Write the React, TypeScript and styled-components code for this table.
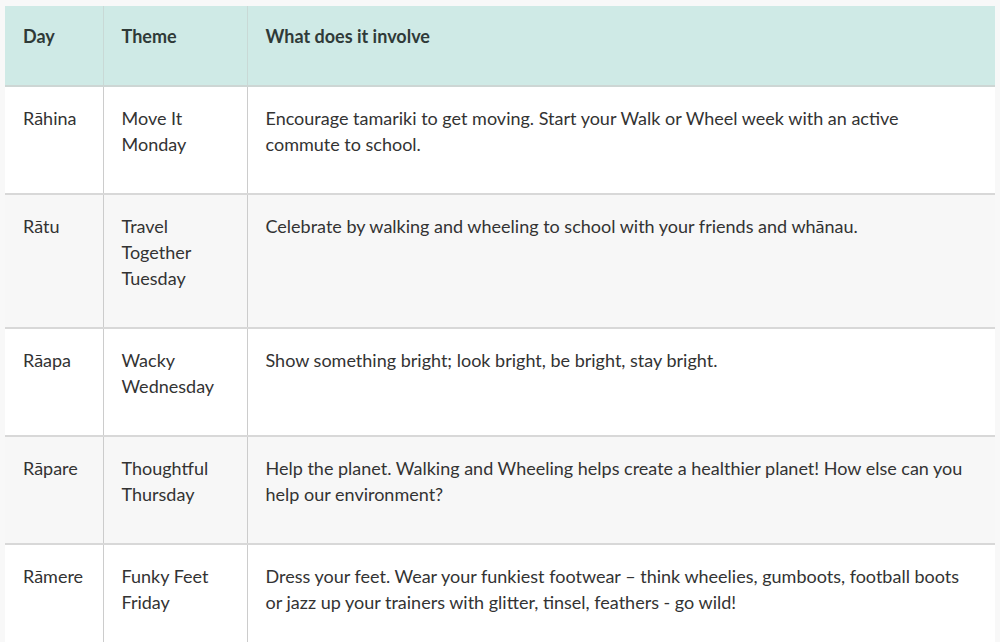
import styled, {createGlobalStyle} from "styled-components";

const GlobalStyle = createGlobalStyle`
    html, body {
        margin: 0;
        background: #f8f8f8;
    }
`

const Page = styled.div`
    padding: 6px 5px;
    font-family: Lato, "Noto Sans", sans-serif;
    color: #333;
`

const Table = styled.table`
    width: 990px;
    border-collapse: collapse;
    table-layout: fixed;
    font-size: 18px;
    line-height: 26px;
`

const HeadCell = styled.th<{ $width?: number }>`
    box-sizing: border-box;
    width: ${p => p.$width ? `${p.$width}px` : "auto"};
    background: #cfeae6;
    color: #2f3a38;
    text-align: left;
    font-weight: 700;
    padding: 17px 18px 36px;
    border-left: 1px solid #c9d9d6;
    border-bottom: 2px solid #cdd6d4;
    vertical-align: top;

    &:first-child {
        border-left: none;
    }
`

const Row = styled.tr<{ $striped: boolean }>`
    background: ${p => p.$striped ? "#f7f7f7" : "#fff"};
    border-bottom: 2px solid #d8d8d8;
`

const Cell = styled.td`
    box-sizing: border-box;
    padding: 18px 18px 36px;
    vertical-align: top;
    border-left: 1px solid #cccccc;

    &:first-child {
        border-left: none;
    }
`

const rows = [
    {day: "Rāhina", theme: "Move It Monday", what: "Encourage tamariki to get moving. Start your Walk or Wheel week with an active commute to school."},
    {day: "Rātu", theme: "Travel Together Tuesday", what: "Celebrate by walking and wheeling to school with your friends and whānau."},
    {day: "Rāapa", theme: "Wacky Wednesday", what: "Show something bright; look bright, be bright, stay bright."},
    {day: "Rāpare", theme: "Thoughtful Thursday", what: "Help the planet. Walking and Wheeling helps create a healthier planet! How else can you help our environment?"},
    {day: "Rāmere", theme: "Funky Feet Friday", what: "Dress your feet. Wear your funkiest footwear – think wheelies, gumboots, football boots or jazz up your trainers with glitter, tinsel, feathers - go wild!"},
]

export default function App() {
    return (
        <>
            <GlobalStyle/>
            <Page>
                <Table>
                    <thead>
                    <tr>
                        <HeadCell $width={98}>Day</HeadCell>
                        <HeadCell $width={144}>Theme</HeadCell>
                        <HeadCell>What does it involve</HeadCell>
                    </tr>
                    </thead>
                    <tbody>
                    {rows.map((r, i) => (
                        <Row key={r.day} $striped={i % 2 === 1}>
                            <Cell>{r.day}</Cell>
                            <Cell>{r.theme}</Cell>
                            <Cell>{r.what}</Cell>
                        </Row>
                    ))}
                    </tbody>
                </Table>
            </Page>
        </>
    )
}
